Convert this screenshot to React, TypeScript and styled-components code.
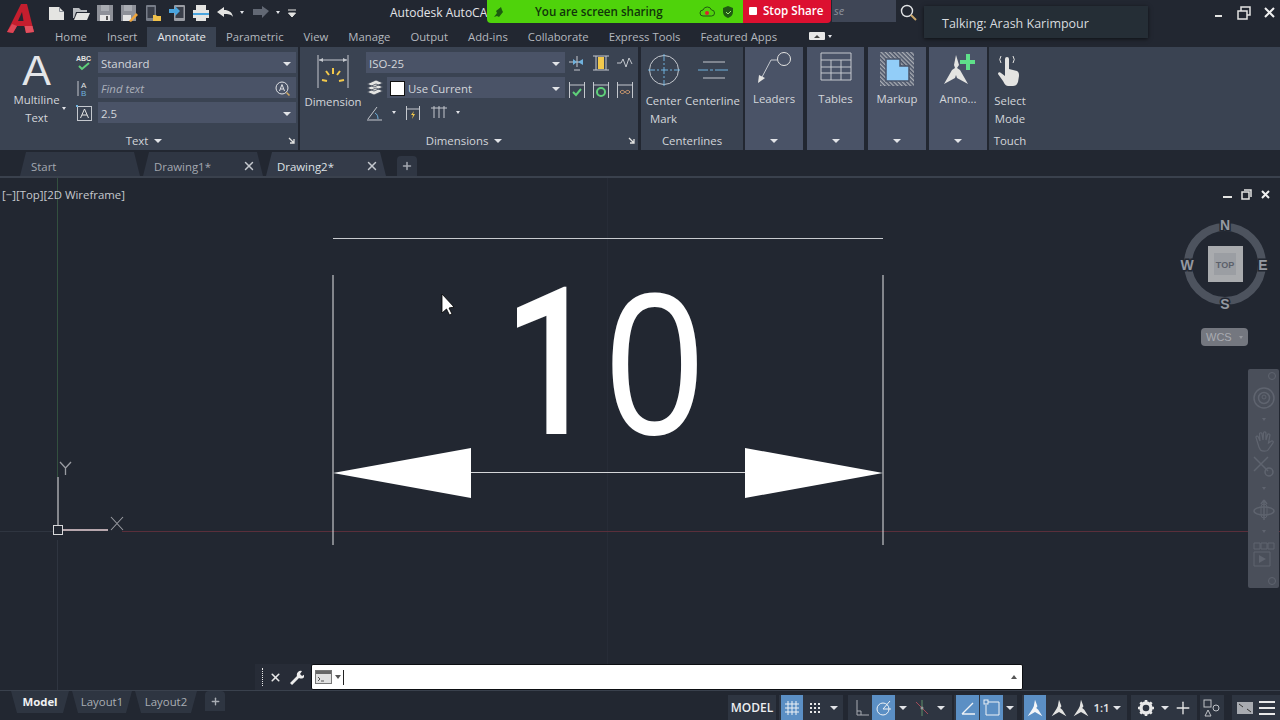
import React from 'react';
import styled, { createGlobalStyle } from 'styled-components';
import { Plus, X } from 'lucide-react';

const bg = '#222731';
const panel = '#3a4352';
const field = '#4a5367';
const ink = '#d3d6db';
const tabFill = '#2f3643';
const navInk = '#5f646f';

const GlobalStyle = createGlobalStyle`
  html, body { margin: 0; padding: 0; background: ${bg}; }
  body { width: 1280px; height: 720px; overflow: hidden; font-family: "Open Sans", "Liberation Sans", sans-serif; font-size: 11.4px; color: ${ink}; }
  * { box-sizing: border-box; }
`;

const Page = styled.div`
  position: relative;
  width: 1280px;
  height: 720px;
  display: flex;
  flex-direction: column;
  overflow: hidden;
`;

/* header */
const Header = styled.header`
  display: flex;
  height: 47px;
`;
const LogoSlot = styled.div`
  width: 45px;
  padding: 4px 0 0 7px;
`;
const HeaderMain = styled.div`
  flex: 1;
  display: flex;
  flex-direction: column;
`;
const TitleRow = styled.div`
  height: 25px;
  display: flex;
  align-items: center;
`;
const QuickBar = styled.div`
  width: 345px;
  display: flex;
  align-items: center;
  gap: 6px;
  padding-left: 3px;
`;
const TitleText = styled.div`
  font-size: 12px;
  color: #e2e4e8;
  white-space: nowrap;
  width: 96px;
`;
const SearchStub = styled.div`
  margin-left: 346px;
  width: 64px;
  height: 22px;
  margin-top: -3px;
  margin-right: 3px;
  background: #3f4656;
  color: #8a8f9a;
  font-style: italic;
  font-size: 11px;
  line-height: 21px;
  padding-left: 2px;
`;
const WinButtons = styled.div`
  margin-left: auto;
  display: flex;
  align-items: center;
  gap: 11px;
  padding-right: 4px;
`;
const TabRow = styled.nav`
  height: 22px;
  display: flex;
  align-items: flex-start;
  padding-top: 2px;
`;
const RibbonTab = styled.div<{ $active?: boolean }>`
  padding: 0 10px;
  height: 20px;
  line-height: 20px;
  font-size: 11.3px;
  color: ${(p) => (p.$active ? '#e6e8eb' : '#b4b8bf')};
  background: ${(p) => (p.$active ? panel : 'transparent')};
  white-space: nowrap;
`;
const TabToggle = styled.div`
  margin-left: 22px;
  display: flex;
  align-items: center;
  gap: 3px;
  height: 18px;
`;

/* zoom overlay + tooltip */
const ShareBar = styled.div`
  position: absolute;
  left: 487px;
  top: 0;
  height: 23px;
  width: 344px;
  display: flex;
  border-radius: 0 0 4px 4px;
  overflow: hidden;
  font-weight: 600;
  font-size: 11.6px;
`;
const ShareGreen = styled.div`
  width: 256px;
  background: #4fd30b;
  color: #10350a;
  display: flex;
  align-items: center;
  padding: 0 8px 0 6px;
`;
const ShareText = styled.span`
  margin-left: 30px;
  margin-right: auto;
`;
const ShareGap = styled.span`
  width: 6px;
`;
const ShareRed = styled.div`
  flex: 1;
  background: #dc1030;
  color: #fff;
  display: flex;
  align-items: center;
  gap: 6px;
  padding: 0 0 2px 6px;
`;
const StopSquare = styled.i`
  width: 8px;
  height: 8px;
  background: #fff;
  border-radius: 1px;
`;
const Talking = styled.div`
  position: absolute;
  left: 924px;
  top: 6px;
  width: 224px;
  height: 32px;
  background: #252e36;
  box-shadow: 0 1px 4px rgba(0, 0, 0, 0.6);
  color: #d7dbdf;
  font-size: 12.5px;
  line-height: 35px;
  padding-left: 18px;
`;

/* ribbon */
const Ribbon = styled.section`
  height: 103px;
  display: flex;
  background: ${bg};
`;
const Panel = styled.div<{ $w?: number; $slide?: boolean; $grow?: boolean; $ml?: number }>`
  width: ${(p) => (p.$w ? `${p.$w}px` : 'auto')};
  flex: ${(p) => (p.$grow ? 1 : 'none')};
  margin-left: ${(p) => p.$ml ?? 0}px;
  background: ${(p) => (p.$slide ? field : panel)};
  display: flex;
  flex-direction: column;
`;
const PanelBody = styled.div`
  flex: 1;
  display: flex;
  min-height: 0;
`;
const PanelFoot = styled.div<{ $shift?: number; $w?: number }>`
  position: relative;
  height: 17px;
  width: ${(p) => (p.$w ? `${p.$w}px` : 'auto')};
  padding: 0 ${(p) => p.$shift ?? 0}px 2px 0;
  text-align: center;
  line-height: 15px;
  color: ${ink};
  display: flex;
  justify-content: center;
  align-items: center;
  gap: 6px;
`;
const Launcher = styled.span`
  position: absolute;
  right: 2px;
  top: 4px;
  display: flex;
`;
const Caret = styled.i`
  display: inline-block;
  width: 0;
  height: 0;
  border-left: 4px solid transparent;
  border-right: 4px solid transparent;
  border-top: 4px solid #e2e4e8;
`;
const SmallCaret = styled(Caret)`
  border-left-width: 2.5px;
  border-right-width: 2.5px;
  border-top-width: 3px;
`;
const NavCaret = styled(SmallCaret)`
  border-top-color: ${navInk};
  margin: 6px 0;
`;
const WcsCaret = styled(SmallCaret)`
  border-top-color: #96989e;
  margin-left: 3px;
`;
const CommandCaret = styled(SmallCaret)`
  border-top-color: #555;
  border-left-width: 3.5px;
  border-right-width: 3.5px;
  border-top-width: 4px;
`;
const BigTool = styled.div<{ $w: number; $pad?: number }>`
  position: relative;
  width: ${(p) => p.$w}px;
  padding-top: ${(p) => p.$pad ?? 4}px;
  display: flex;
  flex-direction: column;
  align-items: center;
  text-align: center;
  line-height: 18px;
  color: ${ink};
`;
const BigLabel = styled.div<{ $top?: number }>`
  margin-top: ${(p) => p.$top ?? 2}px;
  white-space: nowrap;
`;
const BigGlyph = styled.div`
  font-family: "Liberation Sans", sans-serif;
  font-size: 43px;
  line-height: 41px;
  color: #e4e6e9;
`;
const SideCaret = styled.span`
  position: absolute;
  left: 62px;
  top: 60px;
  display: flex;
`;
const Rows = styled.div<{ $w: number }>`
  width: ${(p) => p.$w}px;
  display: flex;
  flex-direction: column;
  gap: 4px;
  padding-top: 5px;
`;
const Row = styled.div<{ $gap?: number }>`
  height: 21px;
  display: flex;
  align-items: center;
  gap: ${(p) => p.$gap ?? 3}px;
`;
const IconSlot = styled.div<{ $w?: number }>`
  width: ${(p) => p.$w ?? 22}px;
  flex: none;
  display: flex;
  justify-content: center;
  align-items: center;
`;
const Field = styled.div<{ $italic?: boolean }>`
  flex: 1;
  height: 21px;
  background: ${field};
  display: flex;
  align-items: center;
  justify-content: space-between;
  padding: 2px 5px 0 3px;
  color: ${(p) => (p.$italic ? '#a9aeb8' : ink)};
  font-style: ${(p) => (p.$italic ? 'italic' : 'normal')};
`;
const Swatch = styled.i`
  width: 15px;
  height: 15px;
  background: #fff;
  border: 1px solid #111;
  margin-right: 2px;
`;
const FieldLeft = styled.span`
  display: flex;
  align-items: center;
  gap: 1px;
`;
const IconGrid = styled.div`
  display: grid;
  grid-template-columns: repeat(3, 24px);
  grid-auto-rows: 27px;
  padding-top: 2px;
  justify-items: center;
  align-items: center;
`;
const SlideBody = styled.div`
  flex: 1;
  display: flex;
  flex-direction: column;
  align-items: center;
  padding-top: 5px;
  line-height: 18px;
`;

/* file tabs */
const FileTabs = styled.div`
  height: 28px;
  display: flex;
  align-items: flex-end;
  padding-left: 20px;
  gap: 3px;
  border-bottom: 2px solid #3a414d;
`;
const FileTab = styled.div<{ $active?: boolean }>`
  width: 120px;
  height: 24px;
  background: ${(p) => (p.$active ? '#343b49' : tabFill)};
  clip-path: polygon(6px 0, calc(100% - 6px) 0, 100% 100%, 0 100%);
  color: ${(p) => (p.$active ? '#dfe1e5' : '#a4a8b0')};
  display: flex;
  align-items: center;
  justify-content: space-between;
  padding: 4px 7px 0 11px;
`;
const AddTab = styled.div<{ $fill: string; $ml?: number }>`
  margin-left: ${(p) => p.$ml ?? 4}px;
  width: 20px;
  height: 20px;
  display: flex;
  align-items: center;
  justify-content: center;
  background: ${(p) => p.$fill};
  border-radius: 4px 4px 0 0;
`;

/* canvas */
const Canvas = styled.main`
  position: relative;
  flex: 1;
  min-height: 0;
`;
const Drawing = styled.svg`
  position: absolute;
  inset: 0;
  display: block;
`;
const ViewLabel = styled.div`
  position: absolute;
  left: 2px;
  top: 9px;
  color: #c6c9ce;
  font-size: 11.4px;
  line-height: 16px;
`;
const ViewportControls = styled.div`
  position: absolute;
  right: 9px;
  top: 11px;
  display: flex;
  gap: 8px;
  align-items: center;
`;
const WcsButton = styled.div`
  position: absolute;
  left: 1201px;
  top: 150px;
  width: 47px;
  height: 18px;
  background: #74777f;
  border-radius: 4px;
  color: #a9abb1;
  font-family: "Liberation Sans", sans-serif;
  font-size: 11px;
  line-height: 18px;
  padding-left: 5px;
  display: flex;
  align-items: center;
  gap: 4px;
`;
const NavBar = styled.div`
  position: absolute;
  left: 1248px;
  top: 191px;
  width: 31px;
  height: 219px;
  background: #4a4f5a;
  border-radius: 2px;
  display: flex;
  flex-direction: column;
  align-items: center;
  padding-top: 17px;
  gap: 2px;
`;
const NavCorner = styled.i<{ $top?: boolean }>`
  position: absolute;
  right: 3px;
  ${(p) => (p.$top ? 'top: 3px;' : 'bottom: 3px;')}
  width: 8px;
  height: 8px;
  border-radius: 50%;
  border: 1px solid ${navInk};
`;
const CommandLine = styled.div`
  position: absolute;
  left: 255px;
  top: 486px;
  width: 768px;
  height: 26px;
  display: flex;
`;
const CommandGrip = styled.div`
  width: 56px;
  background: #272c37;
  display: flex;
  align-items: center;
  gap: 6px;
  padding-left: 7px;
`;
const GripDots = styled.i`
  width: 1px;
  height: 18px;
  border-left: 1px dotted #e8e8e8;
`;
const CommandInput = styled.div`
  flex: 1;
  background: #fff;
  border: 1px solid #0c0e12;
  border-radius: 2px;
  display: flex;
  align-items: center;
  padding: 0 3px;
  gap: 2px;
`;
const TextCursor = styled.i`
  width: 1px;
  height: 15px;
  background: #222;
`;
const CommandArrow = styled.i`
  margin-left: auto;
  margin-right: 2px;
  width: 0;
  height: 0;
  border-left: 3.5px solid transparent;
  border-right: 3.5px solid transparent;
  border-bottom: 4px solid #555;
`;

/* status bar */
const StatusBar = styled.footer`
  height: 30px;
  border-top: 1px solid #3a414d;
  display: flex;
  justify-content: space-between;
`;
const LayoutTabs = styled.div`
  display: flex;
  align-items: flex-start;
  padding-left: 11px;
  gap: 3px;
`;
const LayoutTab = styled.div<{ $w: number; $active?: boolean }>`
  width: ${(p) => p.$w}px;
  height: 22px;
  background: #2e3541;
  clip-path: polygon(0 0, 100% 0, calc(100% - 6px) 100%, 6px 100%);
  text-align: center;
  line-height: 21px;
  font-weight: ${(p) => (p.$active ? 700 : 400)};
  color: ${(p) => (p.$active ? '#f0f1f3' : '#a9adb4')};
`;
const StatusGroups = styled.div`
  display: flex;
  align-items: flex-end;
`;
const StatusGroup = styled.div<{ $w: number; $ml?: number }>`
  width: ${(p) => p.$w}px;
  margin-left: ${(p) => p.$ml ?? 0}px;
  height: 25px;
  background: #2e3541;
  display: flex;
  align-items: center;
  padding: 0 2px;
`;
const StatusBtn = styled.div<{ $w: number; $on?: boolean }>`
  width: ${(p) => p.$w}px;
  height: 25px;
  flex: none;
  display: flex;
  align-items: center;
  justify-content: center;
  gap: 3px;
  background: ${(p) => (p.$on ? '#5b8fc4' : 'transparent')};
  margin-right: ${(p) => (p.$on ? 1 : 0)}px;
`;
const ModelLabel = styled.span`
  font-weight: 600;
  color: #eceef0;
  font-size: 12px;
`;
const ScaleLabel = styled.span`
  color: #e4e6e8;
  font-size: 11.4px;
  font-weight: 600;
`;

const Ic: React.FC<{ w: number; h?: number; children: React.ReactNode }> = ({ w, h, children }) => (
  <svg width={w} height={h ?? w} viewBox={`0 0 ${w} ${h ?? w}`} fill="none" style={{ display: 'block', flex: 'none' }}>
    {children}
  </svg>
);

const light = '#e4e4e2';
const line = '#c4c8ce';
const blue = '#6fb1dc';
const yellow = '#f2c84b';
const saveGrey = '#8e9199';

const AnnoGlyph = ({ c = light, s = 22 }: { c?: string; s?: number }) => (
  <svg width={s} height={s} viewBox="0 0 22 22" style={{ display: 'block' }}>
    <path d="M11 1 L14 9 L12.5 11 L15 13 L20 21 L11 16 L2 21 L8 12 L9.5 9 Z" fill={c} />
  </svg>
);

const DimFrame = ({ children }: { children?: React.ReactNode }) => (
  <Ic w={20}>
    <path d="M2.5 2v16M17.5 2v16M2.5 5h15" stroke={line} />
    {children}
  </Ic>
);

const LauncherIcon = () => (
  <Launcher>
    <Ic w={8}><path d="M1 1l5 5M6 2v4H2" stroke={light} strokeWidth="1.3" /></Ic>
  </Launcher>
);

export default function App() {
  return (
    <Page>
      <GlobalStyle />
      <Header>
        <LogoSlot>
          <svg width="27" height="30" viewBox="0 0 27 30" style={{ display: 'block' }}>
            <path d="M14 0 L20 0 L27 28 L19 29 L17.5 22 L10 22 L6 29 L0 28 Z" fill="#c41e2e" />
            <path d="M15 8 L11 17 L16.5 17 Z" fill={bg} />
            <path d="M10 22 L17.5 22 L19 29 L27 28 L25.5 22 Z" fill="#e2505f" />
            <path d="M0 28 L6 29 L10 22 L5 20 Z" fill="#dc4656" />
          </svg>
        </LogoSlot>
        <HeaderMain>
          <TitleRow>
            <QuickBar>
              <Ic w={18}><path d="M1 3h10l5 5v8H1z" fill={light} /><path d="M11.5 3v4.5H16" stroke="#8a8f98" /></Ic>
              <Ic w={18}><path d="M1 4h6l2 2h6v2H4L2 14H1z" fill="#b9bcc0" /><path d="M5 9h13l-3 7H2z" fill={light} /></Ic>
              <Ic w={18}><path d="M1 1h16v16H1z" fill={saveGrey} /><path d="M5 1h8v6H5z" fill="#a9acb2" /><path d="M4 11h10v6H4z" fill="#e6e6e6" /><path d="M10 12h2v4h-2z" fill="#555" /></Ic>
              <Ic w={18}><path d="M1 1h15v16H1z" fill={saveGrey} /><path d="M4 1h8v6H4z" fill="#a9acb2" /><path d="M3 11h8v6H3z" fill="#e6e6e6" /><path d="M9 17l7-8 2 2-7 7z" fill="#f0a53a" /></Ic>
              <Ic w={18}><rect x="2" y="1" width="10" height="16" rx="1" fill="#777d88" /><rect x="3.5" y="3" width="7" height="11" fill="#3a3f4a" /><path d="M9 11h3l1 1h4v5H9z" fill="#f0c14a" /></Ic>
              <Ic w={18}><rect x="6" y="1" width="11" height="16" rx="1" fill="#9a9da4" /><rect x="7.5" y="3" width="8" height="11" fill="#3a3f4a" /><path d="M1 5h6V2l5 5-5 5V9H1z" fill="#4aa5df" /></Ic>
              <Ic w={18}><path d="M4 1h10v5H4zM1 6h16v8h-3v3H4v-3H1z" fill={light} /><path d="M1 9h16v2H1z" fill="#4aa5df" /></Ic>
              <Ic w={18}><path d="M1 8l7-5v3c5 0 8 2 9 7-2-3-5-3-9-3v3z" fill={light} /></Ic>
              <SmallCaret />
              <Ic w={20}><path d="M19 8l-7-5v3H3v6h9v3z" fill="#626874" /></Ic>
              <SmallCaret />
              <Ic w={12}><path d="M2 3h8M2.5 6h7L6 10z" stroke={light} fill={light} /></Ic>
            </QuickBar>
            <TitleText>Autodesk AutoCA</TitleText>
            <SearchStub>se</SearchStub>
            <Ic w={20}><circle cx="8" cy="8" r="5.5" stroke="#e2e4e6" strokeWidth="1.4" /><path d="M12 12l5 5" stroke="#c9a66b" strokeWidth="2" /></Ic>
            <WinButtons>
              <Ic w={14}><path d="M3 10h7" stroke={light} strokeWidth="2" /></Ic>
              <Ic w={14}><path d="M1 5h9v8H1zM4 5V1h9v8h-3" stroke={light} strokeWidth="1.5" /></Ic>
              <Ic w={14}><path d="M3 2l9 9M12 2l-9 9" stroke="#f0f0f0" strokeWidth="2" /></Ic>
            </WinButtons>
          </TitleRow>
          <TabRow>
            {['Home', 'Insert', 'Annotate', 'Parametric', 'View', 'Manage', 'Output', 'Add-ins', 'Collaborate', 'Express Tools', 'Featured Apps'].map((t) => (
              <RibbonTab key={t} $active={t === 'Annotate'}>{t}</RibbonTab>
            ))}
            <TabToggle>
              <Ic w={16} h={8}><rect width="16" height="8" rx="1" fill="#e8e8e8" /><path d="M5 6l3-3 3 3z" fill="#444" /></Ic>
              <SmallCaret />
            </TabToggle>
          </TabRow>
        </HeaderMain>
      </Header>

      <Ribbon>
        <Panel $w={298}>
          <PanelBody>
            <BigTool $w={73} $pad={3}>
              <BigGlyph>A</BigGlyph>
              <BigLabel $top={0}>Multiline</BigLabel>
              <div>Text</div>
              <SideCaret><SmallCaret /></SideCaret>
            </BigTool>
            <Rows $w={223}>
              <Row>
                <IconSlot>
                  <Ic w={18}>
                    <text x="1" y="7" fontSize="7" fontWeight="700" fontFamily="Liberation Sans" fill={light}>ABC</text>
                    <path d="M4 12l3 3 7-6" stroke="#5fd07a" strokeWidth="2" />
                  </Ic>
                </IconSlot>
                <Field>Standard<Caret /></Field>
              </Row>
              <Row>
                <IconSlot>
                  <Ic w={18}>
                    <path d="M3 2v15" stroke={line} />
                    <text x="6" y="9" fontSize="8" fontFamily="Liberation Sans" fill={light}>A</text>
                    <text x="6" y="17" fontSize="8" fontFamily="Liberation Sans" fill={blue}>B</text>
                  </Ic>
                </IconSlot>
                <Field $italic>
                  Find text
                  <Ic w={16}><circle cx="7" cy="7" r="6" stroke="#e0e2e5" /><path d="M4.5 10L7 3.5 9.5 10M5.5 8h3" stroke="#e0e2e5" /><path d="M11.5 11.5l3 3" stroke="#d0a860" strokeWidth="1.5" /></Ic>
                </Field>
              </Row>
              <Row>
                <IconSlot>
                  <Ic w={18}>
                    <rect x="2.5" y="2.5" width="14" height="14" stroke={line} />
                    <path d="M5.5 14L9.5 5l4 9M7 11h5" stroke={light} />
                    <rect x="1" y="1" width="2" height="2" fill={blue} />
                  </Ic>
                </IconSlot>
                <Field>2.5<Caret /></Field>
              </Row>
            </Rows>
          </PanelBody>
          <PanelFoot $shift={10}>
            Text <Caret />
            <LauncherIcon />
          </PanelFoot>
        </Panel>

        <Panel $w={338} $ml={2}>
          <PanelBody>
            <BigTool $w={66} $pad={7}>
              <Ic w={34}>
                <path d="M2 1v33M32 1v33M3 6h28" stroke={line} />
                <path d="M3 6l4-2v4zM31 6l-4-2v4z" fill={line} />
                <path d="M17 14v6M10 17l3 4M24 17l-3 4M6 26l5 1M28 26l-5 1" stroke={yellow} strokeWidth="2" />
              </Ic>
              <BigLabel $top={5}>Dimension</BigLabel>
            </BigTool>
            <Rows $w={199}>
              <Row><Field>ISO-25<Caret /></Field></Row>
              <Row>
                <IconSlot $w={18}>
                  <Ic w={18}><path d="M1 5l9-4 7 3-9 4zM1 9l9-4 7 3-9 4zM1 13l9-4 7 3-9 4z" fill={light} stroke={panel} strokeWidth="0.8" /></Ic>
                </IconSlot>
                <Field><FieldLeft><Swatch />Use Current</FieldLeft><Caret /></Field>
              </Row>
              <Row $gap={8}>
                <IconSlot $w={18}>
                  <Ic w={18}><path d="M2 15L11 3M1 16h15" stroke={line} /><path d="M9 9c2 1 3 3 3 6" stroke={blue} /></Ic>
                </IconSlot>
                <SmallCaret />
                <Ic w={18}><path d="M2.5 2v14M15.5 2v14M3 5h12" stroke={line} /><path d="M10 7l-3 4h2l-1 4 3-5H9z" fill={yellow} /></Ic>
                <Ic w={18}><path d="M1 4h16M4 2v12M9 2v12M14 2v12" stroke={line} /></Ic>
                <SmallCaret />
              </Row>
            </Rows>
            <IconGrid>
              <Ic w={18}><path d="M1 8h14M9 2v11M6 16h6" stroke={line} /><path d="M9 8l-4-3v6zM10 8l5-3v6z" fill={blue} /></Ic>
              <Ic w={18}><path d="M1 2h16M1 16h16M4 2v14M14 2v14" stroke={line} /><rect x="6" y="3" width="6" height="12" fill={yellow} /></Ic>
              <Ic w={18}><path d="M1 9h4l2-4 3 8 3-9 3 6" stroke={line} /></Ic>
              <DimFrame><path d="M6 12l3 3 5-6" stroke="#5fd07a" strokeWidth="2" /></DimFrame>
              <DimFrame><circle cx="10" cy="12" r="4" stroke="#5fd07a" strokeWidth="2" /></DimFrame>
              <DimFrame><path d="M5 12c2-3 4-1 5 0s3 3 5 0c-2-3-4-1-5 0s-3 3-5 0z" stroke="#d8a070" /></DimFrame>
            </IconGrid>
          </PanelBody>
          <PanelFoot $shift={10}>
            Dimensions <Caret />
            <LauncherIcon />
          </PanelFoot>
        </Panel>

        <Panel $w={102} $ml={3}>
          <PanelBody>
            <BigTool $w={45} $pad={7}>
              <Ic w={32}><circle cx="16" cy="16" r="14.5" stroke={line} /><path d="M16 0v32M0 16h32" stroke={blue} strokeDasharray="7 2 2 2" /></Ic>
              <BigLabel $top={6}>Center</BigLabel>
              <div>Mark</div>
            </BigTool>
            <BigTool $w={53} $pad={7}>
              <Ic w={32}><path d="M6 8h22M6 24h22" stroke={line} /><path d="M1 16h10M13 16h3M18 16h13" stroke={blue} /></Ic>
              <BigLabel $top={6}>Centerline</BigLabel>
            </BigTool>
          </PanelBody>
          <PanelFoot>Centerlines</PanelFoot>
        </Panel>

        <Panel $w={58} $slide $ml={2}>
          <SlideBody>
            <Ic w={34} h={34}><circle cx="27" cy="7" r="6.5" stroke={light} /><path d="M20 8h-6L4 27" stroke={line} /><path d="M1 31l1-8 6 3z" fill={light} /></Ic>
            <BigLabel $top={4}>Leaders</BigLabel>
          </SlideBody>
          <PanelFoot><Caret /></PanelFoot>
        </Panel>
        <Panel $w={57} $slide $ml={4}>
          <SlideBody>
            <Ic w={32} h={30}><path d="M1 1h30v27H1zM1 8h30M1 15h30M1 21h30M11 8v20M21 8v20" stroke={line} /></Ic>
            <BigLabel $top={8}>Tables</BigLabel>
          </SlideBody>
          <PanelFoot><Caret /></PanelFoot>
        </Panel>
        <Panel $w={58} $slide $ml={4}>
          <SlideBody>
            <Ic w={34}>
              <defs>
                <pattern id="markupHatch" width="3" height="3" patternUnits="userSpaceOnUse" patternTransform="rotate(-45)">
                  <rect width="1.4" height="3" fill="#a9adb4" />
                </pattern>
              </defs>
              <rect width="34" height="34" fill="url(#markupHatch)" />
              <path d="M6 7h14v7h9v15H6z" fill="#92cdf8" stroke={field} strokeWidth="1.5" />
            </Ic>
            <BigLabel $top={4}>Markup</BigLabel>
          </SlideBody>
          <PanelFoot><Caret /></PanelFoot>
        </Panel>
        <Panel $w={58} $slide $ml={3}>
          <SlideBody>
            <Ic w={34}>
              <path d="M15 3l3 10-2 3 3 2 8 14-11-6-1-3-1 3-11 6 8-14 3-2-1-3z" fill={light} />
              <path d="M19 8h6V2h4v6h5v4h-5v6h-4v-6h-6z" fill="#5fe08a" />
            </Ic>
            <BigLabel $top={4}>Anno...</BigLabel>
          </SlideBody>
          <PanelFoot><Caret /></PanelFoot>
        </Panel>
        <Panel $grow $ml={2}>
          <PanelBody>
            <BigTool $w={42} $pad={6}>
              <Ic w={30} h={34}>
                <path d="M6 10a6 6 0 0 1 0-7M18 3a6 6 0 0 1 0 7" stroke={light} />
                <path d="M10 6a2 2 0 0 1 4 0v10l8 2c2 1 2 3 2 5l-1 6c-1 3-3 4-5 4h-4c-3 0-4-1-6-5l-5-7c0-2 2-2 3-1l4 3z" fill={light} />
              </Ic>
              <BigLabel $top={5}>Select</BigLabel>
              <div>Mode</div>
            </BigTool>
          </PanelBody>
          <PanelFoot $w={42}>Touch</PanelFoot>
        </Panel>
      </Ribbon>

      <FileTabs>
        <FileTab>Start</FileTab>
        <FileTab>Drawing1*<X size={14} color="#c4c8ce" strokeWidth={2.5} /></FileTab>
        <FileTab $active>Drawing2*<X size={14} color="#c4c8ce" strokeWidth={2.5} /></FileTab>
        <AddTab $fill={tabFill} $ml={8}><Plus size={12} color="#a4a8b0" strokeWidth={3} /></AddTab>
      </FileTabs>

      <Canvas>
        <Drawing width="1280" height="512" viewBox="0 178 1280 512">
          <path d="M57.5 178V477" stroke="#33503f" />
          <path d="M57.5 540V690" stroke="#2f3540" />
          <path d="M607.5 178V690" stroke="#272c37" />
          <path d="M0 531.5H53" stroke="#2f3540" />
          <path d="M122 531.5H1280" stroke="#5a2f3b" />
          <path d="M58 477V526" stroke="#e8e8ea" strokeWidth="1" />
          <path d="M63 530H108" stroke="#b7a7ad" strokeWidth="2" />
          <rect x="53.5" y="525.5" width="9" height="9" stroke="#d8d8da" fill="none" />
          <path d="M60 462l5.5 6 5.5-6M65.5 468v7" stroke="#9a9ca2" strokeWidth="1.3" fill="none" />
          <path d="M111 517l12 13M123 517l-12 13" stroke="#9a9ca2" strokeWidth="1.1" />
          {/* dimension */}
          <path d="M333 238.5H883" stroke="#c9cbcf" strokeWidth="1" />
          <path d="M333 275V545M883 275V545" stroke="#e3e4e6" />
          <path d="M470 472.5H745" stroke="#d5d6d9" />
          <path d="M333 473L471 448V498Z" fill="#fff" />
          <path d="M883 473L745 448V498Z" fill="#fff" />
          <text transform="translate(503 434) scale(.82 1)" fontFamily="Roboto" fontWeight="500" fontSize="206" fill="#fff">1</text>
          <text transform="translate(605.5 434) scale(.87 1)" fontFamily="Liberation Sans" fontSize="203" fill="#fff">0</text>
          {/* cursor */}
          <path d="M442 294V313L446.5 309L449.5 315L452 314L449 308L454 307Z" fill="#fff" stroke="#000" strokeWidth="0.8" />
          {/* view cube */}
          <circle cx="1225" cy="264" r="37" stroke="#4d535e" strokeWidth="8" fill="none" />
          <rect x="1208" y="246" width="35" height="36" fill="#a9abae" />
          <rect x="1214" y="253" width="22" height="22" fill="#9b9ea3" />
          <text x="1225" y="268" textAnchor="middle" fontFamily="Liberation Sans" fontWeight="700" fontSize="9" fill="#5c616b">TOP</text>
          <g fontFamily="Liberation Sans" fontWeight="700" fontSize="14" fill="#9599a1" textAnchor="middle" stroke={bg} strokeWidth="3" paintOrder="stroke">
            <text x="1225" y="230">N</text>
            <text x="1225" y="309">S</text>
            <text x="1187" y="270">W</text>
            <text x="1263" y="270">E</text>
          </g>
        </Drawing>
        <ViewLabel>[−][Top][2D Wireframe]</ViewLabel>
        <ViewportControls>
          <Ic w={11}><path d="M1 8h9" stroke={light} strokeWidth="2" /></Ic>
          <Ic w={11}><path d="M1 3h7v7H1zM3 1h7v7" stroke={light} strokeWidth="1.5" /></Ic>
          <Ic w={11}><path d="M2 2l7 7M9 2l-7 7" stroke="#f0f0f0" strokeWidth="2" /></Ic>
        </ViewportControls>
        <WcsButton>WCS<WcsCaret /></WcsButton>
        <NavBar>
          <NavCorner $top />
          <Ic w={24}><circle cx="12" cy="12" r="10" stroke={navInk} strokeWidth="1.5" /><circle cx="12" cy="12" r="5.5" stroke={navInk} strokeWidth="1.5" /><circle cx="12" cy="11" r="2" stroke={navInk} /></Ic>
          <NavCaret />
          <Ic w={24}>
            <path d="M6 15L4 8.5a1.2 1.2 0 0 1 2.3-.6L8 12 7.5 5a1.2 1.2 0 0 1 2.4-.1L11 11l.5-7a1.2 1.2 0 0 1 2.4.1L14 11l1.6-5.2a1.2 1.2 0 0 1 2.3.7L16.5 14l3-2a1.2 1.2 0 0 1 1.5 1.8L16 21c-1 1.5-6 1.5-7.5 0-1-1-2-4-2.5-6z" stroke={navInk} strokeWidth="1.2" />
          </Ic>
          <Ic w={24}><path d="M2 2l14 14M16 2L2 16" stroke={navInk} strokeWidth="1.5" /><circle cx="17" cy="17" r="4" stroke={navInk} strokeWidth="1.5" /></Ic>
          <NavCaret />
          <Ic w={24}><path d="M12 2v20M12 2l-3 4M12 2l3 4" stroke={navInk} strokeWidth="1.5" /><ellipse cx="12" cy="13" rx="10" ry="4" stroke={navInk} strokeWidth="1.5" /><rect x="9" y="6" width="6" height="14" rx="3" stroke={navInk} /></Ic>
          <NavCaret />
          <Ic w={24} h={30}><path d="M2 2h6v6H2zM9 2h6v6H9zM16 2h6v6h-6zM2 11h16v14H2z" stroke={navInk} /><path d="M7 14l7 4-7 4z" fill={navInk} /></Ic>
          <NavCorner />
        </NavBar>
        <CommandLine>
          <CommandGrip>
            <GripDots />
            <X size={13} color="#e8e8e8" strokeWidth={3} />
            <Ic w={16}><path d="M2 14l7-7a4 4 0 0 1 5-5l-2 3 2 2 3-2a4 4 0 0 1-6 4l-7 7z" fill="#ececec" /></Ic>
          </CommandGrip>
          <CommandInput>
            <Ic w={18} h={14}><rect x="0.5" y="0.5" width="16" height="13" fill="#e0e0e0" stroke="#777" /><path d="M1 1h15v3H1z" fill="#666" /><path d="M3 7l2 2-2 2M6 11h3" stroke="#555" /></Ic>
            <CommandCaret />
            <TextCursor />
            <CommandArrow />
          </CommandInput>
        </CommandLine>
      </Canvas>

      <StatusBar>
        <LayoutTabs>
          <LayoutTab $w={58} $active>Model</LayoutTab>
          <LayoutTab $w={60}>Layout1</LayoutTab>
          <LayoutTab $w={62}>Layout2</LayoutTab>
          <AddTab $fill="#2e3541" $ml={5}><Plus size={11} color="#a9adb4" strokeWidth={3} /></AddTab>
        </LayoutTabs>
        <StatusGroups>
          <StatusGroup $w={48}><StatusBtn $w={44}><ModelLabel>MODEL</ModelLabel></StatusBtn></StatusGroup>
          <StatusGroup $w={64} $ml={3}>
            <StatusBtn $w={22} $on><Ic w={16}><path d="M4 1v14M8 1v14M12 1v14M1 4h14M1 8h14M1 12h14" stroke="#eef2f6" /></Ic></StatusBtn>
            <StatusBtn $w={22}><Ic w={14}><path d="M2 2h2v2H2zM6 2h2v2H6zM10 2h2v2h-2zM2 6h2v2H2zM6 6h2v2H6zM10 6h2v2h-2zM2 10h2v2H2zM6 10h2v2H6zM10 10h2v2h-2z" fill="#e8e8e8" /></Ic></StatusBtn>
            <StatusBtn $w={16}><Caret /></StatusBtn>
          </StatusGroup>
          <StatusGroup $w={104} $ml={5}>
            <StatusBtn $w={22}><Ic w={18}><path d="M5 1v15h12M5 12h4v4" stroke="#a8acb3" /></Ic></StatusBtn>
            <StatusBtn $w={23} $on><Ic w={18}><circle cx="8" cy="10" r="6" stroke="#eef2f6" /><path d="M8 10h8M8 10L15 2" stroke="#eef2f6" /></Ic></StatusBtn>
            <StatusBtn $w={14}><Caret /></StatusBtn>
            <StatusBtn $w={24}><Ic w={18}><path d="M9 1v16" stroke="#5f8f6a" /><path d="M3 3l12 12" stroke="#a34a58" /><circle cx="9" cy="9" r="1.5" fill="#999" /></Ic></StatusBtn>
            <StatusBtn $w={14}><Caret /></StatusBtn>
          </StatusGroup>
          <StatusGroup $w={63} $ml={2}>
            <StatusBtn $w={23} $on><Ic w={16}><path d="M2 14L13 3M2 14h13" stroke="#eef2f6" strokeWidth="1.4" /></Ic></StatusBtn>
            <StatusBtn $w={23} $on><Ic w={18}><path d="M5 3h11v13H3V6" stroke="#eef2f6" /><rect x="1" y="1" width="4" height="4" stroke="#eef2f6" /></Ic></StatusBtn>
            <StatusBtn $w={12}><Caret /></StatusBtn>
          </StatusGroup>
          <StatusGroup $w={105} $ml={5}>
            <StatusBtn $w={22} $on><AnnoGlyph c="#f4f6f8" s={18} /></StatusBtn>
            <StatusBtn $w={24}><AnnoGlyph s={18} /></StatusBtn>
            <StatusBtn $w={20}><AnnoGlyph s={18} /></StatusBtn>
            <StatusBtn $w={32}><ScaleLabel>1:1</ScaleLabel><Caret /></StatusBtn>
          </StatusGroup>
          <StatusGroup $w={66} $ml={4}>
            <StatusBtn $w={26}>
              <Ic w={18}>
                <circle cx="9" cy="9" r="5" stroke="#e8e8e8" strokeWidth="3.4" />
                <path d="M9 1v3M9 14v3M1 9h3M14 9h3M3.3 3.3l2.2 2.2M12.5 12.5l2.2 2.2M14.7 3.3l-2.2 2.2M5.5 12.5l-2.2 2.2" stroke="#e8e8e8" strokeWidth="2.6" />
              </Ic>
            </StatusBtn>
            <StatusBtn $w={12}><Caret /></StatusBtn>
            <StatusBtn $w={24}><Plus size={20} color="#e8e8e8" strokeWidth={1.6} /></StatusBtn>
          </StatusGroup>
          <StatusGroup $w={24} $ml={3}>
            <StatusBtn $w={20}><Ic w={18}><rect x="1" y="1" width="7" height="7" stroke="#c0c3c8" /><circle cx="13" cy="9" r="3" stroke="#c0c3c8" /><path d="M5 11l3 6H2z" stroke="#c0c3c8" /></Ic></StatusBtn>
          </StatusGroup>
          <StatusGroup $w={48} $ml={8}>
            <StatusBtn $w={22}><Ic w={18}><rect x="1" y="3" width="16" height="12" fill="#a8abb1" /><path d="M3 5l4 3M15 13l-4-3" stroke="#333" /></Ic></StatusBtn>
            <StatusBtn $w={22}><Ic w={18}><path d="M1 3h16M1 9h16M1 15h16" stroke="#e8e8e8" strokeWidth="2" /></Ic></StatusBtn>
          </StatusGroup>
        </StatusGroups>
      </StatusBar>

      <ShareBar>
        <ShareGreen>
          <Ic w={12}><path d="M8 1L3 5l1 2-3 4 3-1 2 1 4-5-1-2z" fill="#1c5c10" /></Ic>
          <ShareText>You are screen sharing</ShareText>
          <Ic w={16}><path d="M4 12a3 3 0 0 1 0-6 4.5 4.5 0 0 1 8.5 0 3 3 0 0 1 0 6z" stroke="#1f5a12" /><circle cx="8" cy="9" r="2" fill="#d23" /></Ic>
          <ShareGap />
          <Ic w={14}><path d="M7 1l5 2v4c0 3-2 5-5 6-3-1-5-3-5-6V3z" fill="#1f5a12" /><path d="M5 7l2 2 3-3" stroke="#9fe878" /></Ic>
        </ShareGreen>
        <ShareRed><StopSquare />Stop Share</ShareRed>
      </ShareBar>
      <Talking>Talking: Arash Karimpour</Talking>
    </Page>
  );
}
